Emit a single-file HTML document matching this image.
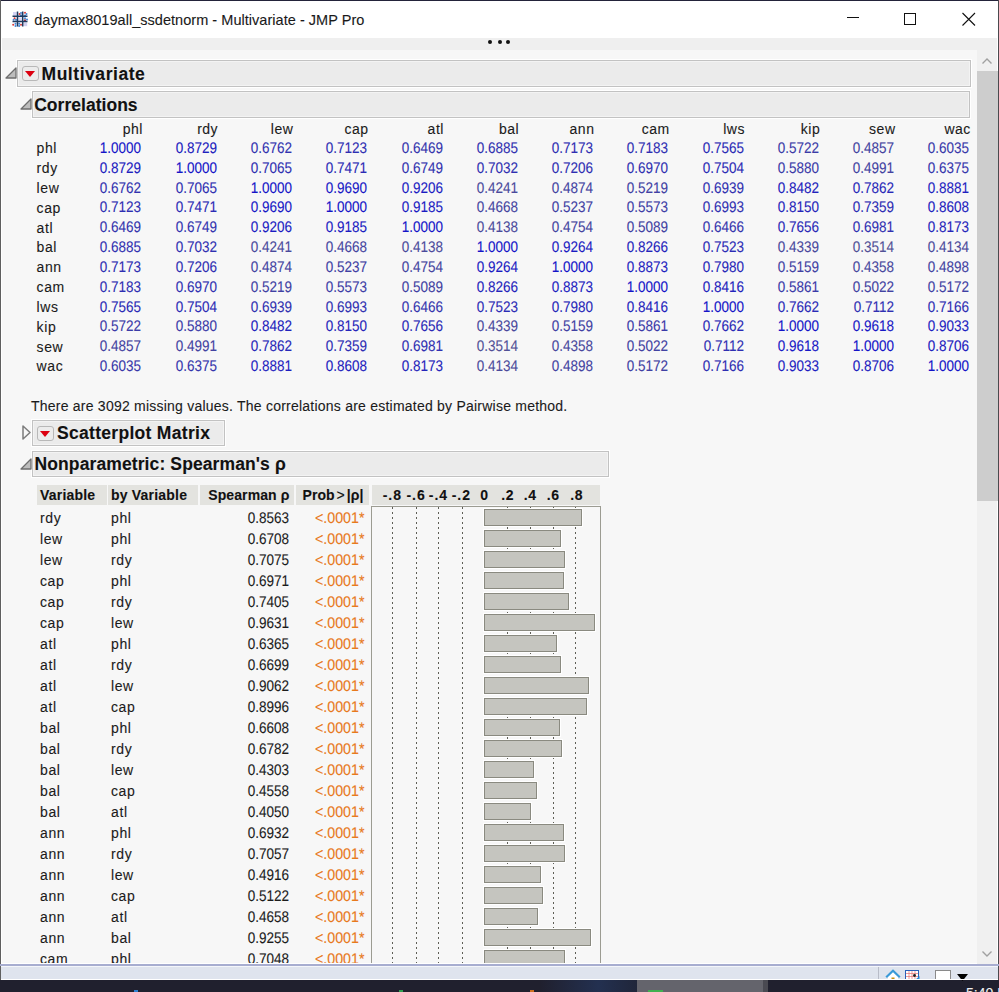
<!DOCTYPE html>
<html><head><meta charset="utf-8"><title>JMP Multivariate</title>
<style>
html,body{margin:0;padding:0;}
body{width:999px;height:992px;overflow:hidden;position:relative;background:#f7f7f7;font-family:"Liberation Sans", sans-serif;}
.t{position:absolute;white-space:pre;-webkit-text-stroke:0.1px currentColor;}
.r{position:absolute;box-sizing:border-box;}
svg{position:absolute;}
</style></head><body>

<div class="r" style="left:0px;top:0px;width:999px;height:38px;background:#ffffff;"></div>
<div class="r" style="left:0px;top:0px;width:999px;height:1px;background:#23233a;"></div>
<div class="r" style="left:0px;top:38px;width:999px;height:12px;background:#efefef;"></div>
<div class="r" style="left:488px;top:40px;width:4px;height:4px;border-radius:50%;background:#111;"></div>
<div class="r" style="left:498px;top:40px;width:4px;height:4px;border-radius:50%;background:#111;"></div>
<div class="r" style="left:506px;top:40px;width:4px;height:4px;border-radius:50%;background:#111;"></div>
<svg style="left:12px;top:11px" width="16" height="16" viewBox="0 0 16 16">
<rect x="1" y="1" width="3.6" height="3.6" fill="#d4d4f4"/>
<rect x="6.4" y="6.4" width="3.4" height="3.4" fill="#d8d8f4"/>
<rect x="11.6" y="11.6" width="3.6" height="3.6" fill="#d0d0f0"/>
<g fill="#3f86d6"><circle cx="9" cy="2" r="1"/><circle cx="9" cy="4.2" r="1"/><circle cx="14.5" cy="3" r="1"/><circle cx="13" cy="4.5" r="1"/><circle cx="1.6" cy="8.8" r="1"/><circle cx="4" cy="8.8" r="1"/><circle cx="13" cy="7.2" r="1"/><circle cx="15" cy="8.5" r="1"/><circle cx="3.5" cy="12.8" r="1"/><circle cx="3.5" cy="15" r="1"/><circle cx="7.2" cy="12.8" r="1"/><circle cx="7.2" cy="15" r="1"/></g>
<g fill="#d83a3a"><circle cx="7.5" cy="3" r="1"/><circle cx="13" cy="1.8" r="1"/><circle cx="2.6" cy="7.3" r="1"/><circle cx="13" cy="9.3" r="1" fill="#a02030"/><circle cx="1.2" cy="13.8" r="1"/><circle cx="9" cy="13.8" r="1"/></g>
<g stroke="#1e3a5f" stroke-width="1.5" fill="none"><path d="M5.5 0.5V15.5M10.7 0.5V15.5M0.5 5.3H15.5M0.5 10.5H15.5"/></g>
</svg>
<div class="t" style="top:12.14px;font-size:14.5px;line-height:16.67px;color:#1a1a1a;letter-spacing:0.035px;left:34.20px;">daymax8019all_ssdetnorm - Multivariate - JMP Pro</div>
<div class="r" style="left:847px;top:17px;width:12px;height:1px;background:#111;"></div>
<div class="r" style="left:904px;top:12.5px;width:12px;height:12px;border:1px solid #111;"></div>
<svg style="left:961px;top:12px" width="15" height="15" viewBox="0 0 15 15"><path d="M1.5 1L14 13.5M14 1L1.5 13.5" stroke="#111" stroke-width="1.1"/></svg>
<div class="r" style="left:0px;top:0px;width:1px;height:992px;background:#5f5f5f;"></div>
<div class="r" style="left:1px;top:1px;width:1px;height:963px;background:#ffffff;"></div>
<div class="r" style="left:998px;top:0px;width:1px;height:992px;background:#4a4a4e;"></div>
<div class="r" style="left:977px;top:50px;width:20px;height:915px;background:#f0f0f0;"></div>
<div class="r" style="left:997px;top:1px;width:1px;height:963px;background:#ffffff;"></div>
<div class="r" style="left:977px;top:71px;width:21px;height:430px;background:#cdcdcd;"></div>
<svg style="left:981px;top:57px" width="12" height="8" viewBox="0 0 12 8"><path d="M1.5 6.5L6 2L10.5 6.5" stroke="#a0a0a0" stroke-width="1.4" fill="none"/></svg>
<svg style="left:981px;top:950px" width="12" height="8" viewBox="0 0 12 8"><path d="M1.5 1.5L6 6L10.5 1.5" stroke="#a0a0a0" stroke-width="1.4" fill="none"/></svg>
<div class="r" style="left:17px;top:60px;width:954px;height:27px;background:#ebebeb;border:1px solid #c2c2c2;box-shadow:0 0 0 1px #ffffff, inset 0 0 0 1px #f3f3f3;"></div>
<svg style="left:5px;top:67px" width="12" height="12" viewBox="0 0 12 12"><path d="M1 11L11 1V11Z" fill="#bdbdbd" stroke="#6e6e6e" stroke-width="1.3" stroke-linejoin="round"/></svg>
<div class="r" style="left:22px;top:66px;width:17px;height:15px;background:#ececec;border:1px solid #b8b8b8;border-radius:3px;"></div>
<svg style="left:25px;top:71px" width="10" height="6" viewBox="0 0 10 6"><path d="M0 0H10L5 6Z" fill="#dc0010"/></svg>
<div class="t" style="top:63.68px;font-size:17.5px;line-height:20.12px;color:#111;font-weight:bold;letter-spacing:0.55px;left:41.50px;">Multivariate</div>
<div class="r" style="left:32px;top:91px;width:938px;height:27px;background:#ebebeb;border:1px solid #c2c2c2;box-shadow:0 0 0 1px #ffffff, inset 0 0 0 1px #f3f3f3;"></div>
<svg style="left:20px;top:98px" width="12" height="12" viewBox="0 0 12 12"><path d="M1 11L11 1V11Z" fill="#bdbdbd" stroke="#6e6e6e" stroke-width="1.3" stroke-linejoin="round"/></svg>
<div class="t" style="top:94.88px;font-size:17.5px;line-height:20.12px;color:#111;font-weight:bold;letter-spacing:0.03px;left:34.20px;">Correlations</div>
<div class="t" style="top:-0.92px;font-size:1px;line-height:1.15px;color:#1b1b1b;left:0.00px;"></div>
<div class="t" style="top:120.60px;font-size:14px;line-height:16.1px;color:#1b1b1b;letter-spacing:0.5px;right:856.20px;">phl</div>
<div class="t" style="top:120.60px;font-size:14px;line-height:16.1px;color:#1b1b1b;letter-spacing:0.5px;right:780.93px;">rdy</div>
<div class="t" style="top:120.60px;font-size:14px;line-height:16.1px;color:#1b1b1b;letter-spacing:0.5px;right:705.66px;">lew</div>
<div class="t" style="top:120.60px;font-size:14px;line-height:16.1px;color:#1b1b1b;letter-spacing:0.5px;right:630.39px;">cap</div>
<div class="t" style="top:120.60px;font-size:14px;line-height:16.1px;color:#1b1b1b;letter-spacing:0.5px;right:555.12px;">atl</div>
<div class="t" style="top:120.60px;font-size:14px;line-height:16.1px;color:#1b1b1b;letter-spacing:0.5px;right:479.85px;">bal</div>
<div class="t" style="top:120.60px;font-size:14px;line-height:16.1px;color:#1b1b1b;letter-spacing:0.5px;right:404.58px;">ann</div>
<div class="t" style="top:120.60px;font-size:14px;line-height:16.1px;color:#1b1b1b;letter-spacing:0.5px;right:329.31px;">cam</div>
<div class="t" style="top:120.60px;font-size:14px;line-height:16.1px;color:#1b1b1b;letter-spacing:0.5px;right:254.04px;">lws</div>
<div class="t" style="top:120.60px;font-size:14px;line-height:16.1px;color:#1b1b1b;letter-spacing:0.5px;right:178.77px;">kip</div>
<div class="t" style="top:120.60px;font-size:14px;line-height:16.1px;color:#1b1b1b;letter-spacing:0.5px;right:103.50px;">sew</div>
<div class="t" style="top:120.60px;font-size:14px;line-height:16.1px;color:#1b1b1b;letter-spacing:0.5px;right:28.23px;">wac</div>
<div class="t" style="top:140.30px;font-size:14px;line-height:16.1px;color:#1b1b1b;letter-spacing:0.6px;left:36.60px;">phl</div>
<div class="t" style="top:140.01px;font-size:15.4px;line-height:17.71px;color:#1414c8;right:857.50px;transform:scaleX(0.877);transform-origin:right 50%;text-rendering:geometricPrecision;">1.0000</div>
<div class="t" style="top:140.01px;font-size:15.4px;line-height:17.71px;color:#2020be;right:782.23px;transform:scaleX(0.877);transform-origin:right 50%;text-rendering:geometricPrecision;">0.8729</div>
<div class="t" style="top:140.01px;font-size:15.4px;line-height:17.71px;color:#3232af;right:706.96px;transform:scaleX(0.877);transform-origin:right 50%;text-rendering:geometricPrecision;">0.6762</div>
<div class="t" style="top:140.01px;font-size:15.4px;line-height:17.71px;color:#2e2eb2;right:631.69px;transform:scaleX(0.877);transform-origin:right 50%;text-rendering:geometricPrecision;">0.7123</div>
<div class="t" style="top:140.01px;font-size:15.4px;line-height:17.71px;color:#3434ad;right:556.42px;transform:scaleX(0.877);transform-origin:right 50%;text-rendering:geometricPrecision;">0.6469</div>
<div class="t" style="top:140.01px;font-size:15.4px;line-height:17.71px;color:#3131b0;right:481.15px;transform:scaleX(0.877);transform-origin:right 50%;text-rendering:geometricPrecision;">0.6885</div>
<div class="t" style="top:140.01px;font-size:15.4px;line-height:17.71px;color:#2e2eb2;right:405.88px;transform:scaleX(0.877);transform-origin:right 50%;text-rendering:geometricPrecision;">0.7173</div>
<div class="t" style="top:140.01px;font-size:15.4px;line-height:17.71px;color:#2e2eb2;right:330.61px;transform:scaleX(0.877);transform-origin:right 50%;text-rendering:geometricPrecision;">0.7183</div>
<div class="t" style="top:140.01px;font-size:15.4px;line-height:17.71px;color:#2a2ab5;right:255.34px;transform:scaleX(0.877);transform-origin:right 50%;text-rendering:geometricPrecision;">0.7565</div>
<div class="t" style="top:140.01px;font-size:15.4px;line-height:17.71px;color:#3b3ba7;right:180.07px;transform:scaleX(0.877);transform-origin:right 50%;text-rendering:geometricPrecision;">0.5722</div>
<div class="t" style="top:140.01px;font-size:15.4px;line-height:17.71px;color:#4343a0;right:104.80px;transform:scaleX(0.877);transform-origin:right 50%;text-rendering:geometricPrecision;">0.4857</div>
<div class="t" style="top:140.01px;font-size:15.4px;line-height:17.71px;color:#3838a9;right:29.53px;transform:scaleX(0.877);transform-origin:right 50%;text-rendering:geometricPrecision;">0.6035</div>
<div class="t" style="top:160.12px;font-size:14px;line-height:16.1px;color:#1b1b1b;letter-spacing:0.6px;left:36.60px;">rdy</div>
<div class="t" style="top:159.83px;font-size:15.4px;line-height:17.71px;color:#2020be;right:857.50px;transform:scaleX(0.877);transform-origin:right 50%;text-rendering:geometricPrecision;">0.8729</div>
<div class="t" style="top:159.83px;font-size:15.4px;line-height:17.71px;color:#1414c8;right:782.23px;transform:scaleX(0.877);transform-origin:right 50%;text-rendering:geometricPrecision;">1.0000</div>
<div class="t" style="top:159.83px;font-size:15.4px;line-height:17.71px;color:#2f2fb1;right:706.96px;transform:scaleX(0.877);transform-origin:right 50%;text-rendering:geometricPrecision;">0.7065</div>
<div class="t" style="top:159.83px;font-size:15.4px;line-height:17.71px;color:#2b2bb5;right:631.69px;transform:scaleX(0.877);transform-origin:right 50%;text-rendering:geometricPrecision;">0.7471</div>
<div class="t" style="top:159.83px;font-size:15.4px;line-height:17.71px;color:#3232af;right:556.42px;transform:scaleX(0.877);transform-origin:right 50%;text-rendering:geometricPrecision;">0.6749</div>
<div class="t" style="top:159.83px;font-size:15.4px;line-height:17.71px;color:#2f2fb1;right:481.15px;transform:scaleX(0.877);transform-origin:right 50%;text-rendering:geometricPrecision;">0.7032</div>
<div class="t" style="top:159.83px;font-size:15.4px;line-height:17.71px;color:#2e2eb2;right:405.88px;transform:scaleX(0.877);transform-origin:right 50%;text-rendering:geometricPrecision;">0.7206</div>
<div class="t" style="top:159.83px;font-size:15.4px;line-height:17.71px;color:#3030b1;right:330.61px;transform:scaleX(0.877);transform-origin:right 50%;text-rendering:geometricPrecision;">0.6970</div>
<div class="t" style="top:159.83px;font-size:15.4px;line-height:17.71px;color:#2b2bb5;right:255.34px;transform:scaleX(0.877);transform-origin:right 50%;text-rendering:geometricPrecision;">0.7504</div>
<div class="t" style="top:159.83px;font-size:15.4px;line-height:17.71px;color:#3a3aa8;right:180.07px;transform:scaleX(0.877);transform-origin:right 50%;text-rendering:geometricPrecision;">0.5880</div>
<div class="t" style="top:159.83px;font-size:15.4px;line-height:17.71px;color:#4242a1;right:104.80px;transform:scaleX(0.877);transform-origin:right 50%;text-rendering:geometricPrecision;">0.4991</div>
<div class="t" style="top:159.83px;font-size:15.4px;line-height:17.71px;color:#3535ac;right:29.53px;transform:scaleX(0.877);transform-origin:right 50%;text-rendering:geometricPrecision;">0.6375</div>
<div class="t" style="top:179.94px;font-size:14px;line-height:16.1px;color:#1b1b1b;letter-spacing:0.6px;left:36.60px;">lew</div>
<div class="t" style="top:179.65px;font-size:15.4px;line-height:17.71px;color:#3232af;right:857.50px;transform:scaleX(0.877);transform-origin:right 50%;text-rendering:geometricPrecision;">0.6762</div>
<div class="t" style="top:179.65px;font-size:15.4px;line-height:17.71px;color:#2f2fb1;right:782.23px;transform:scaleX(0.877);transform-origin:right 50%;text-rendering:geometricPrecision;">0.7065</div>
<div class="t" style="top:179.65px;font-size:15.4px;line-height:17.71px;color:#1414c8;right:706.96px;transform:scaleX(0.877);transform-origin:right 50%;text-rendering:geometricPrecision;">1.0000</div>
<div class="t" style="top:179.65px;font-size:15.4px;line-height:17.71px;color:#1717c6;right:631.69px;transform:scaleX(0.877);transform-origin:right 50%;text-rendering:geometricPrecision;">0.9690</div>
<div class="t" style="top:179.65px;font-size:15.4px;line-height:17.71px;color:#1b1bc2;right:556.42px;transform:scaleX(0.877);transform-origin:right 50%;text-rendering:geometricPrecision;">0.9206</div>
<div class="t" style="top:179.65px;font-size:15.4px;line-height:17.71px;color:#49499c;right:481.15px;transform:scaleX(0.877);transform-origin:right 50%;text-rendering:geometricPrecision;">0.4241</div>
<div class="t" style="top:179.65px;font-size:15.4px;line-height:17.71px;color:#4343a1;right:405.88px;transform:scaleX(0.877);transform-origin:right 50%;text-rendering:geometricPrecision;">0.4874</div>
<div class="t" style="top:179.65px;font-size:15.4px;line-height:17.71px;color:#4040a3;right:330.61px;transform:scaleX(0.877);transform-origin:right 50%;text-rendering:geometricPrecision;">0.5219</div>
<div class="t" style="top:179.65px;font-size:15.4px;line-height:17.71px;color:#3030b0;right:255.34px;transform:scaleX(0.877);transform-origin:right 50%;text-rendering:geometricPrecision;">0.6939</div>
<div class="t" style="top:179.65px;font-size:15.4px;line-height:17.71px;color:#2222bc;right:180.07px;transform:scaleX(0.877);transform-origin:right 50%;text-rendering:geometricPrecision;">0.8482</div>
<div class="t" style="top:179.65px;font-size:15.4px;line-height:17.71px;color:#2828b8;right:104.80px;transform:scaleX(0.877);transform-origin:right 50%;text-rendering:geometricPrecision;">0.7862</div>
<div class="t" style="top:179.65px;font-size:15.4px;line-height:17.71px;color:#1e1ebf;right:29.53px;transform:scaleX(0.877);transform-origin:right 50%;text-rendering:geometricPrecision;">0.8881</div>
<div class="t" style="top:199.76px;font-size:14px;line-height:16.1px;color:#1b1b1b;letter-spacing:0.6px;left:36.60px;">cap</div>
<div class="t" style="top:199.47px;font-size:15.4px;line-height:17.71px;color:#2e2eb2;right:857.50px;transform:scaleX(0.877);transform-origin:right 50%;text-rendering:geometricPrecision;">0.7123</div>
<div class="t" style="top:199.47px;font-size:15.4px;line-height:17.71px;color:#2b2bb5;right:782.23px;transform:scaleX(0.877);transform-origin:right 50%;text-rendering:geometricPrecision;">0.7471</div>
<div class="t" style="top:199.47px;font-size:15.4px;line-height:17.71px;color:#1717c6;right:706.96px;transform:scaleX(0.877);transform-origin:right 50%;text-rendering:geometricPrecision;">0.9690</div>
<div class="t" style="top:199.47px;font-size:15.4px;line-height:17.71px;color:#1414c8;right:631.69px;transform:scaleX(0.877);transform-origin:right 50%;text-rendering:geometricPrecision;">1.0000</div>
<div class="t" style="top:199.47px;font-size:15.4px;line-height:17.71px;color:#1b1bc2;right:556.42px;transform:scaleX(0.877);transform-origin:right 50%;text-rendering:geometricPrecision;">0.9185</div>
<div class="t" style="top:199.47px;font-size:15.4px;line-height:17.71px;color:#45459f;right:481.15px;transform:scaleX(0.877);transform-origin:right 50%;text-rendering:geometricPrecision;">0.4668</div>
<div class="t" style="top:199.47px;font-size:15.4px;line-height:17.71px;color:#4040a3;right:405.88px;transform:scaleX(0.877);transform-origin:right 50%;text-rendering:geometricPrecision;">0.5237</div>
<div class="t" style="top:199.47px;font-size:15.4px;line-height:17.71px;color:#3d3da6;right:330.61px;transform:scaleX(0.877);transform-origin:right 50%;text-rendering:geometricPrecision;">0.5573</div>
<div class="t" style="top:199.47px;font-size:15.4px;line-height:17.71px;color:#3030b1;right:255.34px;transform:scaleX(0.877);transform-origin:right 50%;text-rendering:geometricPrecision;">0.6993</div>
<div class="t" style="top:199.47px;font-size:15.4px;line-height:17.71px;color:#2525ba;right:180.07px;transform:scaleX(0.877);transform-origin:right 50%;text-rendering:geometricPrecision;">0.8150</div>
<div class="t" style="top:199.47px;font-size:15.4px;line-height:17.71px;color:#2c2cb4;right:104.80px;transform:scaleX(0.877);transform-origin:right 50%;text-rendering:geometricPrecision;">0.7359</div>
<div class="t" style="top:199.47px;font-size:15.4px;line-height:17.71px;color:#2121bd;right:29.53px;transform:scaleX(0.877);transform-origin:right 50%;text-rendering:geometricPrecision;">0.8608</div>
<div class="t" style="top:219.58px;font-size:14px;line-height:16.1px;color:#1b1b1b;letter-spacing:0.6px;left:36.60px;">atl</div>
<div class="t" style="top:219.29px;font-size:15.4px;line-height:17.71px;color:#3434ad;right:857.50px;transform:scaleX(0.877);transform-origin:right 50%;text-rendering:geometricPrecision;">0.6469</div>
<div class="t" style="top:219.29px;font-size:15.4px;line-height:17.71px;color:#3232af;right:782.23px;transform:scaleX(0.877);transform-origin:right 50%;text-rendering:geometricPrecision;">0.6749</div>
<div class="t" style="top:219.29px;font-size:15.4px;line-height:17.71px;color:#1b1bc2;right:706.96px;transform:scaleX(0.877);transform-origin:right 50%;text-rendering:geometricPrecision;">0.9206</div>
<div class="t" style="top:219.29px;font-size:15.4px;line-height:17.71px;color:#1b1bc2;right:631.69px;transform:scaleX(0.877);transform-origin:right 50%;text-rendering:geometricPrecision;">0.9185</div>
<div class="t" style="top:219.29px;font-size:15.4px;line-height:17.71px;color:#1414c8;right:556.42px;transform:scaleX(0.877);transform-origin:right 50%;text-rendering:geometricPrecision;">1.0000</div>
<div class="t" style="top:219.29px;font-size:15.4px;line-height:17.71px;color:#4a4a9b;right:481.15px;transform:scaleX(0.877);transform-origin:right 50%;text-rendering:geometricPrecision;">0.4138</div>
<div class="t" style="top:219.29px;font-size:15.4px;line-height:17.71px;color:#4444a0;right:405.88px;transform:scaleX(0.877);transform-origin:right 50%;text-rendering:geometricPrecision;">0.4754</div>
<div class="t" style="top:219.29px;font-size:15.4px;line-height:17.71px;color:#4141a2;right:330.61px;transform:scaleX(0.877);transform-origin:right 50%;text-rendering:geometricPrecision;">0.5089</div>
<div class="t" style="top:219.29px;font-size:15.4px;line-height:17.71px;color:#3535ad;right:255.34px;transform:scaleX(0.877);transform-origin:right 50%;text-rendering:geometricPrecision;">0.6466</div>
<div class="t" style="top:219.29px;font-size:15.4px;line-height:17.71px;color:#2a2ab6;right:180.07px;transform:scaleX(0.877);transform-origin:right 50%;text-rendering:geometricPrecision;">0.7656</div>
<div class="t" style="top:219.29px;font-size:15.4px;line-height:17.71px;color:#3030b1;right:104.80px;transform:scaleX(0.877);transform-origin:right 50%;text-rendering:geometricPrecision;">0.6981</div>
<div class="t" style="top:219.29px;font-size:15.4px;line-height:17.71px;color:#2525ba;right:29.53px;transform:scaleX(0.877);transform-origin:right 50%;text-rendering:geometricPrecision;">0.8173</div>
<div class="t" style="top:239.40px;font-size:14px;line-height:16.1px;color:#1b1b1b;letter-spacing:0.6px;left:36.60px;">bal</div>
<div class="t" style="top:239.11px;font-size:15.4px;line-height:17.71px;color:#3131b0;right:857.50px;transform:scaleX(0.877);transform-origin:right 50%;text-rendering:geometricPrecision;">0.6885</div>
<div class="t" style="top:239.11px;font-size:15.4px;line-height:17.71px;color:#2f2fb1;right:782.23px;transform:scaleX(0.877);transform-origin:right 50%;text-rendering:geometricPrecision;">0.7032</div>
<div class="t" style="top:239.11px;font-size:15.4px;line-height:17.71px;color:#49499c;right:706.96px;transform:scaleX(0.877);transform-origin:right 50%;text-rendering:geometricPrecision;">0.4241</div>
<div class="t" style="top:239.11px;font-size:15.4px;line-height:17.71px;color:#45459f;right:631.69px;transform:scaleX(0.877);transform-origin:right 50%;text-rendering:geometricPrecision;">0.4668</div>
<div class="t" style="top:239.11px;font-size:15.4px;line-height:17.71px;color:#4a4a9b;right:556.42px;transform:scaleX(0.877);transform-origin:right 50%;text-rendering:geometricPrecision;">0.4138</div>
<div class="t" style="top:239.11px;font-size:15.4px;line-height:17.71px;color:#1414c8;right:481.15px;transform:scaleX(0.877);transform-origin:right 50%;text-rendering:geometricPrecision;">1.0000</div>
<div class="t" style="top:239.11px;font-size:15.4px;line-height:17.71px;color:#1b1bc2;right:405.88px;transform:scaleX(0.877);transform-origin:right 50%;text-rendering:geometricPrecision;">0.9264</div>
<div class="t" style="top:239.11px;font-size:15.4px;line-height:17.71px;color:#2424bb;right:330.61px;transform:scaleX(0.877);transform-origin:right 50%;text-rendering:geometricPrecision;">0.8266</div>
<div class="t" style="top:239.11px;font-size:15.4px;line-height:17.71px;color:#2b2bb5;right:255.34px;transform:scaleX(0.877);transform-origin:right 50%;text-rendering:geometricPrecision;">0.7523</div>
<div class="t" style="top:239.11px;font-size:15.4px;line-height:17.71px;color:#48489c;right:180.07px;transform:scaleX(0.877);transform-origin:right 50%;text-rendering:geometricPrecision;">0.4339</div>
<div class="t" style="top:239.11px;font-size:15.4px;line-height:17.71px;color:#505096;right:104.80px;transform:scaleX(0.877);transform-origin:right 50%;text-rendering:geometricPrecision;">0.3514</div>
<div class="t" style="top:239.11px;font-size:15.4px;line-height:17.71px;color:#4a4a9b;right:29.53px;transform:scaleX(0.877);transform-origin:right 50%;text-rendering:geometricPrecision;">0.4134</div>
<div class="t" style="top:259.22px;font-size:14px;line-height:16.1px;color:#1b1b1b;letter-spacing:0.6px;left:36.60px;">ann</div>
<div class="t" style="top:258.93px;font-size:15.4px;line-height:17.71px;color:#2e2eb2;right:857.50px;transform:scaleX(0.877);transform-origin:right 50%;text-rendering:geometricPrecision;">0.7173</div>
<div class="t" style="top:258.93px;font-size:15.4px;line-height:17.71px;color:#2e2eb2;right:782.23px;transform:scaleX(0.877);transform-origin:right 50%;text-rendering:geometricPrecision;">0.7206</div>
<div class="t" style="top:258.93px;font-size:15.4px;line-height:17.71px;color:#4343a1;right:706.96px;transform:scaleX(0.877);transform-origin:right 50%;text-rendering:geometricPrecision;">0.4874</div>
<div class="t" style="top:258.93px;font-size:15.4px;line-height:17.71px;color:#4040a3;right:631.69px;transform:scaleX(0.877);transform-origin:right 50%;text-rendering:geometricPrecision;">0.5237</div>
<div class="t" style="top:258.93px;font-size:15.4px;line-height:17.71px;color:#4444a0;right:556.42px;transform:scaleX(0.877);transform-origin:right 50%;text-rendering:geometricPrecision;">0.4754</div>
<div class="t" style="top:258.93px;font-size:15.4px;line-height:17.71px;color:#1b1bc2;right:481.15px;transform:scaleX(0.877);transform-origin:right 50%;text-rendering:geometricPrecision;">0.9264</div>
<div class="t" style="top:258.93px;font-size:15.4px;line-height:17.71px;color:#1414c8;right:405.88px;transform:scaleX(0.877);transform-origin:right 50%;text-rendering:geometricPrecision;">1.0000</div>
<div class="t" style="top:258.93px;font-size:15.4px;line-height:17.71px;color:#1e1ebf;right:330.61px;transform:scaleX(0.877);transform-origin:right 50%;text-rendering:geometricPrecision;">0.8873</div>
<div class="t" style="top:258.93px;font-size:15.4px;line-height:17.71px;color:#2727b8;right:255.34px;transform:scaleX(0.877);transform-origin:right 50%;text-rendering:geometricPrecision;">0.7980</div>
<div class="t" style="top:258.93px;font-size:15.4px;line-height:17.71px;color:#4141a3;right:180.07px;transform:scaleX(0.877);transform-origin:right 50%;text-rendering:geometricPrecision;">0.5159</div>
<div class="t" style="top:258.93px;font-size:15.4px;line-height:17.71px;color:#48489d;right:104.80px;transform:scaleX(0.877);transform-origin:right 50%;text-rendering:geometricPrecision;">0.4358</div>
<div class="t" style="top:258.93px;font-size:15.4px;line-height:17.71px;color:#4343a1;right:29.53px;transform:scaleX(0.877);transform-origin:right 50%;text-rendering:geometricPrecision;">0.4898</div>
<div class="t" style="top:279.04px;font-size:14px;line-height:16.1px;color:#1b1b1b;letter-spacing:0.6px;left:36.60px;">cam</div>
<div class="t" style="top:278.75px;font-size:15.4px;line-height:17.71px;color:#2e2eb2;right:857.50px;transform:scaleX(0.877);transform-origin:right 50%;text-rendering:geometricPrecision;">0.7183</div>
<div class="t" style="top:278.75px;font-size:15.4px;line-height:17.71px;color:#3030b1;right:782.23px;transform:scaleX(0.877);transform-origin:right 50%;text-rendering:geometricPrecision;">0.6970</div>
<div class="t" style="top:278.75px;font-size:15.4px;line-height:17.71px;color:#4040a3;right:706.96px;transform:scaleX(0.877);transform-origin:right 50%;text-rendering:geometricPrecision;">0.5219</div>
<div class="t" style="top:278.75px;font-size:15.4px;line-height:17.71px;color:#3d3da6;right:631.69px;transform:scaleX(0.877);transform-origin:right 50%;text-rendering:geometricPrecision;">0.5573</div>
<div class="t" style="top:278.75px;font-size:15.4px;line-height:17.71px;color:#4141a2;right:556.42px;transform:scaleX(0.877);transform-origin:right 50%;text-rendering:geometricPrecision;">0.5089</div>
<div class="t" style="top:278.75px;font-size:15.4px;line-height:17.71px;color:#2424bb;right:481.15px;transform:scaleX(0.877);transform-origin:right 50%;text-rendering:geometricPrecision;">0.8266</div>
<div class="t" style="top:278.75px;font-size:15.4px;line-height:17.71px;color:#1e1ebf;right:405.88px;transform:scaleX(0.877);transform-origin:right 50%;text-rendering:geometricPrecision;">0.8873</div>
<div class="t" style="top:278.75px;font-size:15.4px;line-height:17.71px;color:#1414c8;right:330.61px;transform:scaleX(0.877);transform-origin:right 50%;text-rendering:geometricPrecision;">1.0000</div>
<div class="t" style="top:278.75px;font-size:15.4px;line-height:17.71px;color:#2323bc;right:255.34px;transform:scaleX(0.877);transform-origin:right 50%;text-rendering:geometricPrecision;">0.8416</div>
<div class="t" style="top:278.75px;font-size:15.4px;line-height:17.71px;color:#3a3aa8;right:180.07px;transform:scaleX(0.877);transform-origin:right 50%;text-rendering:geometricPrecision;">0.5861</div>
<div class="t" style="top:278.75px;font-size:15.4px;line-height:17.71px;color:#4242a2;right:104.80px;transform:scaleX(0.877);transform-origin:right 50%;text-rendering:geometricPrecision;">0.5022</div>
<div class="t" style="top:278.75px;font-size:15.4px;line-height:17.71px;color:#4040a3;right:29.53px;transform:scaleX(0.877);transform-origin:right 50%;text-rendering:geometricPrecision;">0.5172</div>
<div class="t" style="top:298.86px;font-size:14px;line-height:16.1px;color:#1b1b1b;letter-spacing:0.6px;left:36.60px;">lws</div>
<div class="t" style="top:298.57px;font-size:15.4px;line-height:17.71px;color:#2a2ab5;right:857.50px;transform:scaleX(0.877);transform-origin:right 50%;text-rendering:geometricPrecision;">0.7565</div>
<div class="t" style="top:298.57px;font-size:15.4px;line-height:17.71px;color:#2b2bb5;right:782.23px;transform:scaleX(0.877);transform-origin:right 50%;text-rendering:geometricPrecision;">0.7504</div>
<div class="t" style="top:298.57px;font-size:15.4px;line-height:17.71px;color:#3030b0;right:706.96px;transform:scaleX(0.877);transform-origin:right 50%;text-rendering:geometricPrecision;">0.6939</div>
<div class="t" style="top:298.57px;font-size:15.4px;line-height:17.71px;color:#3030b1;right:631.69px;transform:scaleX(0.877);transform-origin:right 50%;text-rendering:geometricPrecision;">0.6993</div>
<div class="t" style="top:298.57px;font-size:15.4px;line-height:17.71px;color:#3535ad;right:556.42px;transform:scaleX(0.877);transform-origin:right 50%;text-rendering:geometricPrecision;">0.6466</div>
<div class="t" style="top:298.57px;font-size:15.4px;line-height:17.71px;color:#2b2bb5;right:481.15px;transform:scaleX(0.877);transform-origin:right 50%;text-rendering:geometricPrecision;">0.7523</div>
<div class="t" style="top:298.57px;font-size:15.4px;line-height:17.71px;color:#2727b8;right:405.88px;transform:scaleX(0.877);transform-origin:right 50%;text-rendering:geometricPrecision;">0.7980</div>
<div class="t" style="top:298.57px;font-size:15.4px;line-height:17.71px;color:#2323bc;right:330.61px;transform:scaleX(0.877);transform-origin:right 50%;text-rendering:geometricPrecision;">0.8416</div>
<div class="t" style="top:298.57px;font-size:15.4px;line-height:17.71px;color:#1414c8;right:255.34px;transform:scaleX(0.877);transform-origin:right 50%;text-rendering:geometricPrecision;">1.0000</div>
<div class="t" style="top:298.57px;font-size:15.4px;line-height:17.71px;color:#2a2ab6;right:180.07px;transform:scaleX(0.877);transform-origin:right 50%;text-rendering:geometricPrecision;">0.7662</div>
<div class="t" style="top:298.57px;font-size:15.4px;line-height:17.71px;color:#2f2fb2;right:104.80px;transform:scaleX(0.877);transform-origin:right 50%;text-rendering:geometricPrecision;">0.7112</div>
<div class="t" style="top:298.57px;font-size:15.4px;line-height:17.71px;color:#2e2eb2;right:29.53px;transform:scaleX(0.877);transform-origin:right 50%;text-rendering:geometricPrecision;">0.7166</div>
<div class="t" style="top:318.68px;font-size:14px;line-height:16.1px;color:#1b1b1b;letter-spacing:0.6px;left:36.60px;">kip</div>
<div class="t" style="top:318.39px;font-size:15.4px;line-height:17.71px;color:#3b3ba7;right:857.50px;transform:scaleX(0.877);transform-origin:right 50%;text-rendering:geometricPrecision;">0.5722</div>
<div class="t" style="top:318.39px;font-size:15.4px;line-height:17.71px;color:#3a3aa8;right:782.23px;transform:scaleX(0.877);transform-origin:right 50%;text-rendering:geometricPrecision;">0.5880</div>
<div class="t" style="top:318.39px;font-size:15.4px;line-height:17.71px;color:#2222bc;right:706.96px;transform:scaleX(0.877);transform-origin:right 50%;text-rendering:geometricPrecision;">0.8482</div>
<div class="t" style="top:318.39px;font-size:15.4px;line-height:17.71px;color:#2525ba;right:631.69px;transform:scaleX(0.877);transform-origin:right 50%;text-rendering:geometricPrecision;">0.8150</div>
<div class="t" style="top:318.39px;font-size:15.4px;line-height:17.71px;color:#2a2ab6;right:556.42px;transform:scaleX(0.877);transform-origin:right 50%;text-rendering:geometricPrecision;">0.7656</div>
<div class="t" style="top:318.39px;font-size:15.4px;line-height:17.71px;color:#48489c;right:481.15px;transform:scaleX(0.877);transform-origin:right 50%;text-rendering:geometricPrecision;">0.4339</div>
<div class="t" style="top:318.39px;font-size:15.4px;line-height:17.71px;color:#4141a3;right:405.88px;transform:scaleX(0.877);transform-origin:right 50%;text-rendering:geometricPrecision;">0.5159</div>
<div class="t" style="top:318.39px;font-size:15.4px;line-height:17.71px;color:#3a3aa8;right:330.61px;transform:scaleX(0.877);transform-origin:right 50%;text-rendering:geometricPrecision;">0.5861</div>
<div class="t" style="top:318.39px;font-size:15.4px;line-height:17.71px;color:#2a2ab6;right:255.34px;transform:scaleX(0.877);transform-origin:right 50%;text-rendering:geometricPrecision;">0.7662</div>
<div class="t" style="top:318.39px;font-size:15.4px;line-height:17.71px;color:#1414c8;right:180.07px;transform:scaleX(0.877);transform-origin:right 50%;text-rendering:geometricPrecision;">1.0000</div>
<div class="t" style="top:318.39px;font-size:15.4px;line-height:17.71px;color:#1818c5;right:104.80px;transform:scaleX(0.877);transform-origin:right 50%;text-rendering:geometricPrecision;">0.9618</div>
<div class="t" style="top:318.39px;font-size:15.4px;line-height:17.71px;color:#1d1dc1;right:29.53px;transform:scaleX(0.877);transform-origin:right 50%;text-rendering:geometricPrecision;">0.9033</div>
<div class="t" style="top:338.50px;font-size:14px;line-height:16.1px;color:#1b1b1b;letter-spacing:0.6px;left:36.60px;">sew</div>
<div class="t" style="top:338.21px;font-size:15.4px;line-height:17.71px;color:#4343a0;right:857.50px;transform:scaleX(0.877);transform-origin:right 50%;text-rendering:geometricPrecision;">0.4857</div>
<div class="t" style="top:338.21px;font-size:15.4px;line-height:17.71px;color:#4242a1;right:782.23px;transform:scaleX(0.877);transform-origin:right 50%;text-rendering:geometricPrecision;">0.4991</div>
<div class="t" style="top:338.21px;font-size:15.4px;line-height:17.71px;color:#2828b8;right:706.96px;transform:scaleX(0.877);transform-origin:right 50%;text-rendering:geometricPrecision;">0.7862</div>
<div class="t" style="top:338.21px;font-size:15.4px;line-height:17.71px;color:#2c2cb4;right:631.69px;transform:scaleX(0.877);transform-origin:right 50%;text-rendering:geometricPrecision;">0.7359</div>
<div class="t" style="top:338.21px;font-size:15.4px;line-height:17.71px;color:#3030b1;right:556.42px;transform:scaleX(0.877);transform-origin:right 50%;text-rendering:geometricPrecision;">0.6981</div>
<div class="t" style="top:338.21px;font-size:15.4px;line-height:17.71px;color:#505096;right:481.15px;transform:scaleX(0.877);transform-origin:right 50%;text-rendering:geometricPrecision;">0.3514</div>
<div class="t" style="top:338.21px;font-size:15.4px;line-height:17.71px;color:#48489d;right:405.88px;transform:scaleX(0.877);transform-origin:right 50%;text-rendering:geometricPrecision;">0.4358</div>
<div class="t" style="top:338.21px;font-size:15.4px;line-height:17.71px;color:#4242a2;right:330.61px;transform:scaleX(0.877);transform-origin:right 50%;text-rendering:geometricPrecision;">0.5022</div>
<div class="t" style="top:338.21px;font-size:15.4px;line-height:17.71px;color:#2f2fb2;right:255.34px;transform:scaleX(0.877);transform-origin:right 50%;text-rendering:geometricPrecision;">0.7112</div>
<div class="t" style="top:338.21px;font-size:15.4px;line-height:17.71px;color:#1818c5;right:180.07px;transform:scaleX(0.877);transform-origin:right 50%;text-rendering:geometricPrecision;">0.9618</div>
<div class="t" style="top:338.21px;font-size:15.4px;line-height:17.71px;color:#1414c8;right:104.80px;transform:scaleX(0.877);transform-origin:right 50%;text-rendering:geometricPrecision;">1.0000</div>
<div class="t" style="top:338.21px;font-size:15.4px;line-height:17.71px;color:#2020be;right:29.53px;transform:scaleX(0.877);transform-origin:right 50%;text-rendering:geometricPrecision;">0.8706</div>
<div class="t" style="top:358.32px;font-size:14px;line-height:16.1px;color:#1b1b1b;letter-spacing:0.6px;left:36.60px;">wac</div>
<div class="t" style="top:358.03px;font-size:15.4px;line-height:17.71px;color:#3838a9;right:857.50px;transform:scaleX(0.877);transform-origin:right 50%;text-rendering:geometricPrecision;">0.6035</div>
<div class="t" style="top:358.03px;font-size:15.4px;line-height:17.71px;color:#3535ac;right:782.23px;transform:scaleX(0.877);transform-origin:right 50%;text-rendering:geometricPrecision;">0.6375</div>
<div class="t" style="top:358.03px;font-size:15.4px;line-height:17.71px;color:#1e1ebf;right:706.96px;transform:scaleX(0.877);transform-origin:right 50%;text-rendering:geometricPrecision;">0.8881</div>
<div class="t" style="top:358.03px;font-size:15.4px;line-height:17.71px;color:#2121bd;right:631.69px;transform:scaleX(0.877);transform-origin:right 50%;text-rendering:geometricPrecision;">0.8608</div>
<div class="t" style="top:358.03px;font-size:15.4px;line-height:17.71px;color:#2525ba;right:556.42px;transform:scaleX(0.877);transform-origin:right 50%;text-rendering:geometricPrecision;">0.8173</div>
<div class="t" style="top:358.03px;font-size:15.4px;line-height:17.71px;color:#4a4a9b;right:481.15px;transform:scaleX(0.877);transform-origin:right 50%;text-rendering:geometricPrecision;">0.4134</div>
<div class="t" style="top:358.03px;font-size:15.4px;line-height:17.71px;color:#4343a1;right:405.88px;transform:scaleX(0.877);transform-origin:right 50%;text-rendering:geometricPrecision;">0.4898</div>
<div class="t" style="top:358.03px;font-size:15.4px;line-height:17.71px;color:#4040a3;right:330.61px;transform:scaleX(0.877);transform-origin:right 50%;text-rendering:geometricPrecision;">0.5172</div>
<div class="t" style="top:358.03px;font-size:15.4px;line-height:17.71px;color:#2e2eb2;right:255.34px;transform:scaleX(0.877);transform-origin:right 50%;text-rendering:geometricPrecision;">0.7166</div>
<div class="t" style="top:358.03px;font-size:15.4px;line-height:17.71px;color:#1d1dc1;right:180.07px;transform:scaleX(0.877);transform-origin:right 50%;text-rendering:geometricPrecision;">0.9033</div>
<div class="t" style="top:358.03px;font-size:15.4px;line-height:17.71px;color:#2020be;right:104.80px;transform:scaleX(0.877);transform-origin:right 50%;text-rendering:geometricPrecision;">0.8706</div>
<div class="t" style="top:358.03px;font-size:15.4px;line-height:17.71px;color:#1414c8;right:29.53px;transform:scaleX(0.877);transform-origin:right 50%;text-rendering:geometricPrecision;">1.0000</div>
<div class="t" style="top:398.10px;font-size:14px;line-height:16.1px;color:#1b1b1b;letter-spacing:0.228px;left:31.00px;">There are 3092 missing values. The correlations are estimated by Pairwise method.</div>
<div class="r" style="left:32px;top:420px;width:193px;height:26px;background:#ebebeb;border:1px solid #c2c2c2;box-shadow:0 0 0 1px #ffffff, inset 0 0 0 1px #f3f3f3;"></div>
<svg style="left:21.5px;top:425px" width="9.0" height="15" viewBox="0 0 9.0 15"><path d="M1 1L8.0 7.5L1 14Z" fill="#f7f7f7" stroke="#7c7c7c" stroke-width="1.5" stroke-linejoin="round"/></svg>
<div class="r" style="left:37px;top:426px;width:17px;height:15px;background:#ececec;border:1px solid #b8b8b8;border-radius:3px;"></div>
<svg style="left:40px;top:431px" width="10" height="6" viewBox="0 0 10 6"><path d="M0 0H10L5 6Z" fill="#dc0010"/></svg>
<div class="t" style="top:423.28px;font-size:17.5px;line-height:20.12px;color:#111;font-weight:bold;letter-spacing:0.3px;left:57.00px;">Scatterplot Matrix</div>
<div class="r" style="left:32px;top:451px;width:577px;height:26px;background:#ebebeb;border:1px solid #c2c2c2;box-shadow:0 0 0 1px #ffffff, inset 0 0 0 1px #f3f3f3;"></div>
<svg style="left:20px;top:458px" width="12" height="12" viewBox="0 0 12 12"><path d="M1 11L11 1V11Z" fill="#bdbdbd" stroke="#6e6e6e" stroke-width="1.3" stroke-linejoin="round"/></svg>
<div class="t" style="top:454.18px;font-size:17.5px;line-height:20.12px;color:#111;font-weight:bold;letter-spacing:0.11px;left:34.50px;">Nonparametric: Spearman&#39;s ρ</div>
<div class="r" style="left:37px;top:485px;width:70px;height:20px;background:#e3e3df;"></div>
<div class="r" style="left:108px;top:485px;width:90px;height:20px;background:#e3e3df;"></div>
<div class="r" style="left:199.5px;top:485px;width:94.5px;height:20px;background:#e3e3df;"></div>
<div class="r" style="left:295.5px;top:485px;width:73.5px;height:20px;background:#e3e3df;"></div>
<div class="r" style="left:372px;top:485px;width:228px;height:20px;background:#e3e3df;"></div>
<div class="t" style="top:486.50px;font-size:14px;line-height:16.1px;color:#111;font-weight:bold;letter-spacing:0.2px;left:40.00px;">Variable</div>
<div class="t" style="top:486.50px;font-size:14px;line-height:16.1px;color:#111;font-weight:bold;letter-spacing:0.2px;left:111.00px;">by Variable</div>
<div class="t" style="top:486.50px;font-size:14px;line-height:16.1px;color:#111;font-weight:bold;letter-spacing:0.1px;right:709.50px;">Spearman ρ</div>
<div class="t" style="top:486.50px;font-size:14px;line-height:16.1px;color:#111;font-weight:bold;letter-spacing:0.05px;left:302.50px;">Prob<span style="font-weight:normal;margin-left:2px;margin-right:2px">&gt;</span>|ρ|</div>
<div class="t" style="top:486.50px;font-size:14px;line-height:16.1px;color:#111;font-weight:bold;letter-spacing:1.0px;left:292.30px;width:200px;text-align:center;">-.8</div>
<div class="t" style="top:486.50px;font-size:14px;line-height:16.1px;color:#111;font-weight:bold;letter-spacing:1.0px;left:316.10px;width:200px;text-align:center;">-.6</div>
<div class="t" style="top:486.50px;font-size:14px;line-height:16.1px;color:#111;font-weight:bold;letter-spacing:1.0px;left:338.40px;width:200px;text-align:center;">-.4</div>
<div class="t" style="top:486.50px;font-size:14px;line-height:16.1px;color:#111;font-weight:bold;letter-spacing:1.0px;left:361.30px;width:200px;text-align:center;">-.2</div>
<div class="t" style="top:486.50px;font-size:14px;line-height:16.1px;color:#111;font-weight:bold;left:384.20px;width:200px;text-align:center;">0</div>
<div class="t" style="top:486.50px;font-size:14px;line-height:16.1px;color:#111;font-weight:bold;letter-spacing:0.6px;left:407.70px;width:200px;text-align:center;">.2</div>
<div class="t" style="top:486.50px;font-size:14px;line-height:16.1px;color:#111;font-weight:bold;letter-spacing:0.6px;left:430.30px;width:200px;text-align:center;">.4</div>
<div class="t" style="top:486.50px;font-size:14px;line-height:16.1px;color:#111;font-weight:bold;letter-spacing:0.6px;left:453.10px;width:200px;text-align:center;">.6</div>
<div class="t" style="top:486.50px;font-size:14px;line-height:16.1px;color:#111;font-weight:bold;letter-spacing:0.6px;left:476.70px;width:200px;text-align:center;">.8</div>
<div class="r" style="left:371px;top:506px;width:230px;height:470px;border:1px solid #9c9c92;border-bottom:none;"></div>
<div class="r" style="left:392px;top:507px;width:1px;height:460px;background:repeating-linear-gradient(to bottom,#5e5e56 0 2px,transparent 2px 5px);"></div>
<div class="r" style="left:416px;top:507px;width:1px;height:460px;background:repeating-linear-gradient(to bottom,#5e5e56 0 2px,transparent 2px 5px);"></div>
<div class="r" style="left:438px;top:507px;width:1px;height:460px;background:repeating-linear-gradient(to bottom,#5e5e56 0 2px,transparent 2px 5px);"></div>
<div class="r" style="left:462px;top:507px;width:1px;height:460px;background:repeating-linear-gradient(to bottom,#5e5e56 0 2px,transparent 2px 5px);"></div>
<div class="r" style="left:507px;top:507px;width:1px;height:460px;background:repeating-linear-gradient(to bottom,#5e5e56 0 2px,transparent 2px 5px);"></div>
<div class="r" style="left:530px;top:507px;width:1px;height:460px;background:repeating-linear-gradient(to bottom,#5e5e56 0 2px,transparent 2px 5px);"></div>
<div class="r" style="left:553px;top:507px;width:1px;height:460px;background:repeating-linear-gradient(to bottom,#5e5e56 0 2px,transparent 2px 5px);"></div>
<div class="r" style="left:575px;top:507px;width:1px;height:460px;background:repeating-linear-gradient(to bottom,#5e5e56 0 2px,transparent 2px 5px);"></div>
<div class="t" style="top:510.40px;font-size:14px;line-height:16.1px;color:#1b1b1b;letter-spacing:0.6px;left:40.00px;">rdy</div>
<div class="t" style="top:510.40px;font-size:14px;line-height:16.1px;color:#1b1b1b;letter-spacing:0.6px;left:111.00px;">phl</div>
<div class="t" style="top:509.71px;font-size:15.4px;line-height:17.71px;color:#1b1b1b;right:709.50px;transform:scaleX(0.88);transform-origin:right 50%;text-rendering:geometricPrecision;">0.8563</div>
<div class="t" style="top:509.71px;font-size:15.4px;line-height:17.71px;color:#e8791c;right:634.50px;transform:scaleX(0.927);transform-origin:right 50%;text-rendering:geometricPrecision;">&lt;.0001*</div>
<div class="r" style="left:484px;top:509px;width:98px;height:17px;background:#c5c5bf;border:1px solid #8a8a80;box-shadow:0 0 0 1px #ffffff;"></div>
<div class="t" style="top:531.40px;font-size:14px;line-height:16.1px;color:#1b1b1b;letter-spacing:0.6px;left:40.00px;">lew</div>
<div class="t" style="top:531.40px;font-size:14px;line-height:16.1px;color:#1b1b1b;letter-spacing:0.6px;left:111.00px;">phl</div>
<div class="t" style="top:530.71px;font-size:15.4px;line-height:17.71px;color:#1b1b1b;right:709.50px;transform:scaleX(0.88);transform-origin:right 50%;text-rendering:geometricPrecision;">0.6708</div>
<div class="t" style="top:530.71px;font-size:15.4px;line-height:17.71px;color:#e8791c;right:634.50px;transform:scaleX(0.927);transform-origin:right 50%;text-rendering:geometricPrecision;">&lt;.0001*</div>
<div class="r" style="left:484px;top:530px;width:77px;height:17px;background:#c5c5bf;border:1px solid #8a8a80;box-shadow:0 0 0 1px #ffffff;"></div>
<div class="t" style="top:552.40px;font-size:14px;line-height:16.1px;color:#1b1b1b;letter-spacing:0.6px;left:40.00px;">lew</div>
<div class="t" style="top:552.40px;font-size:14px;line-height:16.1px;color:#1b1b1b;letter-spacing:0.6px;left:111.00px;">rdy</div>
<div class="t" style="top:551.71px;font-size:15.4px;line-height:17.71px;color:#1b1b1b;right:709.50px;transform:scaleX(0.88);transform-origin:right 50%;text-rendering:geometricPrecision;">0.7075</div>
<div class="t" style="top:551.71px;font-size:15.4px;line-height:17.71px;color:#e8791c;right:634.50px;transform:scaleX(0.927);transform-origin:right 50%;text-rendering:geometricPrecision;">&lt;.0001*</div>
<div class="r" style="left:484px;top:551px;width:81px;height:17px;background:#c5c5bf;border:1px solid #8a8a80;box-shadow:0 0 0 1px #ffffff;"></div>
<div class="t" style="top:573.40px;font-size:14px;line-height:16.1px;color:#1b1b1b;letter-spacing:0.6px;left:40.00px;">cap</div>
<div class="t" style="top:573.40px;font-size:14px;line-height:16.1px;color:#1b1b1b;letter-spacing:0.6px;left:111.00px;">phl</div>
<div class="t" style="top:572.71px;font-size:15.4px;line-height:17.71px;color:#1b1b1b;right:709.50px;transform:scaleX(0.88);transform-origin:right 50%;text-rendering:geometricPrecision;">0.6971</div>
<div class="t" style="top:572.71px;font-size:15.4px;line-height:17.71px;color:#e8791c;right:634.50px;transform:scaleX(0.927);transform-origin:right 50%;text-rendering:geometricPrecision;">&lt;.0001*</div>
<div class="r" style="left:484px;top:572px;width:80px;height:17px;background:#c5c5bf;border:1px solid #8a8a80;box-shadow:0 0 0 1px #ffffff;"></div>
<div class="t" style="top:594.40px;font-size:14px;line-height:16.1px;color:#1b1b1b;letter-spacing:0.6px;left:40.00px;">cap</div>
<div class="t" style="top:594.40px;font-size:14px;line-height:16.1px;color:#1b1b1b;letter-spacing:0.6px;left:111.00px;">rdy</div>
<div class="t" style="top:593.71px;font-size:15.4px;line-height:17.71px;color:#1b1b1b;right:709.50px;transform:scaleX(0.88);transform-origin:right 50%;text-rendering:geometricPrecision;">0.7405</div>
<div class="t" style="top:593.71px;font-size:15.4px;line-height:17.71px;color:#e8791c;right:634.50px;transform:scaleX(0.927);transform-origin:right 50%;text-rendering:geometricPrecision;">&lt;.0001*</div>
<div class="r" style="left:484px;top:593px;width:85px;height:17px;background:#c5c5bf;border:1px solid #8a8a80;box-shadow:0 0 0 1px #ffffff;"></div>
<div class="t" style="top:615.40px;font-size:14px;line-height:16.1px;color:#1b1b1b;letter-spacing:0.6px;left:40.00px;">cap</div>
<div class="t" style="top:615.40px;font-size:14px;line-height:16.1px;color:#1b1b1b;letter-spacing:0.6px;left:111.00px;">lew</div>
<div class="t" style="top:614.71px;font-size:15.4px;line-height:17.71px;color:#1b1b1b;right:709.50px;transform:scaleX(0.88);transform-origin:right 50%;text-rendering:geometricPrecision;">0.9631</div>
<div class="t" style="top:614.71px;font-size:15.4px;line-height:17.71px;color:#e8791c;right:634.50px;transform:scaleX(0.927);transform-origin:right 50%;text-rendering:geometricPrecision;">&lt;.0001*</div>
<div class="r" style="left:484px;top:614px;width:111px;height:17px;background:#c5c5bf;border:1px solid #8a8a80;box-shadow:0 0 0 1px #ffffff;"></div>
<div class="t" style="top:636.40px;font-size:14px;line-height:16.1px;color:#1b1b1b;letter-spacing:0.6px;left:40.00px;">atl</div>
<div class="t" style="top:636.40px;font-size:14px;line-height:16.1px;color:#1b1b1b;letter-spacing:0.6px;left:111.00px;">phl</div>
<div class="t" style="top:635.71px;font-size:15.4px;line-height:17.71px;color:#1b1b1b;right:709.50px;transform:scaleX(0.88);transform-origin:right 50%;text-rendering:geometricPrecision;">0.6365</div>
<div class="t" style="top:635.71px;font-size:15.4px;line-height:17.71px;color:#e8791c;right:634.50px;transform:scaleX(0.927);transform-origin:right 50%;text-rendering:geometricPrecision;">&lt;.0001*</div>
<div class="r" style="left:484px;top:635px;width:73px;height:17px;background:#c5c5bf;border:1px solid #8a8a80;box-shadow:0 0 0 1px #ffffff;"></div>
<div class="t" style="top:657.40px;font-size:14px;line-height:16.1px;color:#1b1b1b;letter-spacing:0.6px;left:40.00px;">atl</div>
<div class="t" style="top:657.40px;font-size:14px;line-height:16.1px;color:#1b1b1b;letter-spacing:0.6px;left:111.00px;">rdy</div>
<div class="t" style="top:656.71px;font-size:15.4px;line-height:17.71px;color:#1b1b1b;right:709.50px;transform:scaleX(0.88);transform-origin:right 50%;text-rendering:geometricPrecision;">0.6699</div>
<div class="t" style="top:656.71px;font-size:15.4px;line-height:17.71px;color:#e8791c;right:634.50px;transform:scaleX(0.927);transform-origin:right 50%;text-rendering:geometricPrecision;">&lt;.0001*</div>
<div class="r" style="left:484px;top:656px;width:77px;height:17px;background:#c5c5bf;border:1px solid #8a8a80;box-shadow:0 0 0 1px #ffffff;"></div>
<div class="t" style="top:678.40px;font-size:14px;line-height:16.1px;color:#1b1b1b;letter-spacing:0.6px;left:40.00px;">atl</div>
<div class="t" style="top:678.40px;font-size:14px;line-height:16.1px;color:#1b1b1b;letter-spacing:0.6px;left:111.00px;">lew</div>
<div class="t" style="top:677.71px;font-size:15.4px;line-height:17.71px;color:#1b1b1b;right:709.50px;transform:scaleX(0.88);transform-origin:right 50%;text-rendering:geometricPrecision;">0.9062</div>
<div class="t" style="top:677.71px;font-size:15.4px;line-height:17.71px;color:#e8791c;right:634.50px;transform:scaleX(0.927);transform-origin:right 50%;text-rendering:geometricPrecision;">&lt;.0001*</div>
<div class="r" style="left:484px;top:677px;width:105px;height:17px;background:#c5c5bf;border:1px solid #8a8a80;box-shadow:0 0 0 1px #ffffff;"></div>
<div class="t" style="top:699.40px;font-size:14px;line-height:16.1px;color:#1b1b1b;letter-spacing:0.6px;left:40.00px;">atl</div>
<div class="t" style="top:699.40px;font-size:14px;line-height:16.1px;color:#1b1b1b;letter-spacing:0.6px;left:111.00px;">cap</div>
<div class="t" style="top:698.71px;font-size:15.4px;line-height:17.71px;color:#1b1b1b;right:709.50px;transform:scaleX(0.88);transform-origin:right 50%;text-rendering:geometricPrecision;">0.8996</div>
<div class="t" style="top:698.71px;font-size:15.4px;line-height:17.71px;color:#e8791c;right:634.50px;transform:scaleX(0.927);transform-origin:right 50%;text-rendering:geometricPrecision;">&lt;.0001*</div>
<div class="r" style="left:484px;top:698px;width:103px;height:17px;background:#c5c5bf;border:1px solid #8a8a80;box-shadow:0 0 0 1px #ffffff;"></div>
<div class="t" style="top:720.40px;font-size:14px;line-height:16.1px;color:#1b1b1b;letter-spacing:0.6px;left:40.00px;">bal</div>
<div class="t" style="top:720.40px;font-size:14px;line-height:16.1px;color:#1b1b1b;letter-spacing:0.6px;left:111.00px;">phl</div>
<div class="t" style="top:719.71px;font-size:15.4px;line-height:17.71px;color:#1b1b1b;right:709.50px;transform:scaleX(0.88);transform-origin:right 50%;text-rendering:geometricPrecision;">0.6608</div>
<div class="t" style="top:719.71px;font-size:15.4px;line-height:17.71px;color:#e8791c;right:634.50px;transform:scaleX(0.927);transform-origin:right 50%;text-rendering:geometricPrecision;">&lt;.0001*</div>
<div class="r" style="left:484px;top:719px;width:76px;height:17px;background:#c5c5bf;border:1px solid #8a8a80;box-shadow:0 0 0 1px #ffffff;"></div>
<div class="t" style="top:741.40px;font-size:14px;line-height:16.1px;color:#1b1b1b;letter-spacing:0.6px;left:40.00px;">bal</div>
<div class="t" style="top:741.40px;font-size:14px;line-height:16.1px;color:#1b1b1b;letter-spacing:0.6px;left:111.00px;">rdy</div>
<div class="t" style="top:740.71px;font-size:15.4px;line-height:17.71px;color:#1b1b1b;right:709.50px;transform:scaleX(0.88);transform-origin:right 50%;text-rendering:geometricPrecision;">0.6782</div>
<div class="t" style="top:740.71px;font-size:15.4px;line-height:17.71px;color:#e8791c;right:634.50px;transform:scaleX(0.927);transform-origin:right 50%;text-rendering:geometricPrecision;">&lt;.0001*</div>
<div class="r" style="left:484px;top:740px;width:78px;height:17px;background:#c5c5bf;border:1px solid #8a8a80;box-shadow:0 0 0 1px #ffffff;"></div>
<div class="t" style="top:762.40px;font-size:14px;line-height:16.1px;color:#1b1b1b;letter-spacing:0.6px;left:40.00px;">bal</div>
<div class="t" style="top:762.40px;font-size:14px;line-height:16.1px;color:#1b1b1b;letter-spacing:0.6px;left:111.00px;">lew</div>
<div class="t" style="top:761.71px;font-size:15.4px;line-height:17.71px;color:#1b1b1b;right:709.50px;transform:scaleX(0.88);transform-origin:right 50%;text-rendering:geometricPrecision;">0.4303</div>
<div class="t" style="top:761.71px;font-size:15.4px;line-height:17.71px;color:#e8791c;right:634.50px;transform:scaleX(0.927);transform-origin:right 50%;text-rendering:geometricPrecision;">&lt;.0001*</div>
<div class="r" style="left:484px;top:761px;width:50px;height:17px;background:#c5c5bf;border:1px solid #8a8a80;box-shadow:0 0 0 1px #ffffff;"></div>
<div class="t" style="top:783.40px;font-size:14px;line-height:16.1px;color:#1b1b1b;letter-spacing:0.6px;left:40.00px;">bal</div>
<div class="t" style="top:783.40px;font-size:14px;line-height:16.1px;color:#1b1b1b;letter-spacing:0.6px;left:111.00px;">cap</div>
<div class="t" style="top:782.71px;font-size:15.4px;line-height:17.71px;color:#1b1b1b;right:709.50px;transform:scaleX(0.88);transform-origin:right 50%;text-rendering:geometricPrecision;">0.4558</div>
<div class="t" style="top:782.71px;font-size:15.4px;line-height:17.71px;color:#e8791c;right:634.50px;transform:scaleX(0.927);transform-origin:right 50%;text-rendering:geometricPrecision;">&lt;.0001*</div>
<div class="r" style="left:484px;top:782px;width:53px;height:17px;background:#c5c5bf;border:1px solid #8a8a80;box-shadow:0 0 0 1px #ffffff;"></div>
<div class="t" style="top:804.40px;font-size:14px;line-height:16.1px;color:#1b1b1b;letter-spacing:0.6px;left:40.00px;">bal</div>
<div class="t" style="top:804.40px;font-size:14px;line-height:16.1px;color:#1b1b1b;letter-spacing:0.6px;left:111.00px;">atl</div>
<div class="t" style="top:803.71px;font-size:15.4px;line-height:17.71px;color:#1b1b1b;right:709.50px;transform:scaleX(0.88);transform-origin:right 50%;text-rendering:geometricPrecision;">0.4050</div>
<div class="t" style="top:803.71px;font-size:15.4px;line-height:17.71px;color:#e8791c;right:634.50px;transform:scaleX(0.927);transform-origin:right 50%;text-rendering:geometricPrecision;">&lt;.0001*</div>
<div class="r" style="left:484px;top:803px;width:47px;height:17px;background:#c5c5bf;border:1px solid #8a8a80;box-shadow:0 0 0 1px #ffffff;"></div>
<div class="t" style="top:825.40px;font-size:14px;line-height:16.1px;color:#1b1b1b;letter-spacing:0.6px;left:40.00px;">ann</div>
<div class="t" style="top:825.40px;font-size:14px;line-height:16.1px;color:#1b1b1b;letter-spacing:0.6px;left:111.00px;">phl</div>
<div class="t" style="top:824.71px;font-size:15.4px;line-height:17.71px;color:#1b1b1b;right:709.50px;transform:scaleX(0.88);transform-origin:right 50%;text-rendering:geometricPrecision;">0.6932</div>
<div class="t" style="top:824.71px;font-size:15.4px;line-height:17.71px;color:#e8791c;right:634.50px;transform:scaleX(0.927);transform-origin:right 50%;text-rendering:geometricPrecision;">&lt;.0001*</div>
<div class="r" style="left:484px;top:824px;width:80px;height:17px;background:#c5c5bf;border:1px solid #8a8a80;box-shadow:0 0 0 1px #ffffff;"></div>
<div class="t" style="top:846.40px;font-size:14px;line-height:16.1px;color:#1b1b1b;letter-spacing:0.6px;left:40.00px;">ann</div>
<div class="t" style="top:846.40px;font-size:14px;line-height:16.1px;color:#1b1b1b;letter-spacing:0.6px;left:111.00px;">rdy</div>
<div class="t" style="top:845.71px;font-size:15.4px;line-height:17.71px;color:#1b1b1b;right:709.50px;transform:scaleX(0.88);transform-origin:right 50%;text-rendering:geometricPrecision;">0.7057</div>
<div class="t" style="top:845.71px;font-size:15.4px;line-height:17.71px;color:#e8791c;right:634.50px;transform:scaleX(0.927);transform-origin:right 50%;text-rendering:geometricPrecision;">&lt;.0001*</div>
<div class="r" style="left:484px;top:845px;width:81px;height:17px;background:#c5c5bf;border:1px solid #8a8a80;box-shadow:0 0 0 1px #ffffff;"></div>
<div class="t" style="top:867.40px;font-size:14px;line-height:16.1px;color:#1b1b1b;letter-spacing:0.6px;left:40.00px;">ann</div>
<div class="t" style="top:867.40px;font-size:14px;line-height:16.1px;color:#1b1b1b;letter-spacing:0.6px;left:111.00px;">lew</div>
<div class="t" style="top:866.71px;font-size:15.4px;line-height:17.71px;color:#1b1b1b;right:709.50px;transform:scaleX(0.88);transform-origin:right 50%;text-rendering:geometricPrecision;">0.4916</div>
<div class="t" style="top:866.71px;font-size:15.4px;line-height:17.71px;color:#e8791c;right:634.50px;transform:scaleX(0.927);transform-origin:right 50%;text-rendering:geometricPrecision;">&lt;.0001*</div>
<div class="r" style="left:484px;top:866px;width:57px;height:17px;background:#c5c5bf;border:1px solid #8a8a80;box-shadow:0 0 0 1px #ffffff;"></div>
<div class="t" style="top:888.40px;font-size:14px;line-height:16.1px;color:#1b1b1b;letter-spacing:0.6px;left:40.00px;">ann</div>
<div class="t" style="top:888.40px;font-size:14px;line-height:16.1px;color:#1b1b1b;letter-spacing:0.6px;left:111.00px;">cap</div>
<div class="t" style="top:887.71px;font-size:15.4px;line-height:17.71px;color:#1b1b1b;right:709.50px;transform:scaleX(0.88);transform-origin:right 50%;text-rendering:geometricPrecision;">0.5122</div>
<div class="t" style="top:887.71px;font-size:15.4px;line-height:17.71px;color:#e8791c;right:634.50px;transform:scaleX(0.927);transform-origin:right 50%;text-rendering:geometricPrecision;">&lt;.0001*</div>
<div class="r" style="left:484px;top:887px;width:59px;height:17px;background:#c5c5bf;border:1px solid #8a8a80;box-shadow:0 0 0 1px #ffffff;"></div>
<div class="t" style="top:909.40px;font-size:14px;line-height:16.1px;color:#1b1b1b;letter-spacing:0.6px;left:40.00px;">ann</div>
<div class="t" style="top:909.40px;font-size:14px;line-height:16.1px;color:#1b1b1b;letter-spacing:0.6px;left:111.00px;">atl</div>
<div class="t" style="top:908.71px;font-size:15.4px;line-height:17.71px;color:#1b1b1b;right:709.50px;transform:scaleX(0.88);transform-origin:right 50%;text-rendering:geometricPrecision;">0.4658</div>
<div class="t" style="top:908.71px;font-size:15.4px;line-height:17.71px;color:#e8791c;right:634.50px;transform:scaleX(0.927);transform-origin:right 50%;text-rendering:geometricPrecision;">&lt;.0001*</div>
<div class="r" style="left:484px;top:908px;width:54px;height:17px;background:#c5c5bf;border:1px solid #8a8a80;box-shadow:0 0 0 1px #ffffff;"></div>
<div class="t" style="top:930.40px;font-size:14px;line-height:16.1px;color:#1b1b1b;letter-spacing:0.6px;left:40.00px;">ann</div>
<div class="t" style="top:930.40px;font-size:14px;line-height:16.1px;color:#1b1b1b;letter-spacing:0.6px;left:111.00px;">bal</div>
<div class="t" style="top:929.71px;font-size:15.4px;line-height:17.71px;color:#1b1b1b;right:709.50px;transform:scaleX(0.88);transform-origin:right 50%;text-rendering:geometricPrecision;">0.9255</div>
<div class="t" style="top:929.71px;font-size:15.4px;line-height:17.71px;color:#e8791c;right:634.50px;transform:scaleX(0.927);transform-origin:right 50%;text-rendering:geometricPrecision;">&lt;.0001*</div>
<div class="r" style="left:484px;top:929px;width:107px;height:17px;background:#c5c5bf;border:1px solid #8a8a80;box-shadow:0 0 0 1px #ffffff;"></div>
<div class="t" style="top:951.40px;font-size:14px;line-height:16.1px;color:#1b1b1b;letter-spacing:0.6px;left:40.00px;">cam</div>
<div class="t" style="top:951.40px;font-size:14px;line-height:16.1px;color:#1b1b1b;letter-spacing:0.6px;left:111.00px;">phl</div>
<div class="t" style="top:950.71px;font-size:15.4px;line-height:17.71px;color:#1b1b1b;right:709.50px;transform:scaleX(0.88);transform-origin:right 50%;text-rendering:geometricPrecision;">0.7048</div>
<div class="t" style="top:950.71px;font-size:15.4px;line-height:17.71px;color:#e8791c;right:634.50px;transform:scaleX(0.927);transform-origin:right 50%;text-rendering:geometricPrecision;">&lt;.0001*</div>
<div class="r" style="left:484px;top:950px;width:81px;height:17px;background:#c5c5bf;border:1px solid #8a8a80;box-shadow:0 0 0 1px #ffffff;"></div>
<div class="r" style="left:2px;top:963px;width:975px;height:1px;background:#ffffff;"></div>
<div class="r" style="left:0px;top:964px;width:999px;height:2px;background:#a7add0;"></div>
<div class="r" style="left:1px;top:966px;width:997px;height:14px;background:#dfe4ee;"></div>
<div class="r" style="left:878px;top:966px;width:1px;height:14px;background:#b8bcc8;"></div>
<div class="r" style="left:0px;top:980px;width:999px;height:12px;background:#20202e;"></div>
<div class="r" style="left:540px;top:980px;width:97px;height:12px;background:linear-gradient(to right,#20202e,#233050 60%,#20263a);"></div>
<div class="r" style="left:637px;top:980px;width:126px;height:12px;background:#64646c;"></div>
<div class="r" style="left:763px;top:980px;width:5px;height:12px;background:#4a4a52;"></div>
<div class="r" style="left:648px;top:990px;width:15px;height:2px;background:#40b050;"></div>
<div class="r" style="left:134px;top:990px;width:4px;height:2px;background:#2f80d0;"></div>
<div class="r" style="left:399px;top:990px;width:4px;height:2px;background:#30a050;"></div>
<div class="r" style="left:530px;top:990px;width:4px;height:2px;background:#d07020;"></div>
<svg style="left:884px;top:968px" width="18" height="12" viewBox="0 0 18 12"><path d="M4 12V8L9 3.5L14 8V12Z" fill="#ffffff"/><path d="M2.2 9.2L9 2.8L15.8 9.2" stroke="#3a9ad8" stroke-width="2.2" fill="none" stroke-linejoin="miter"/><rect x="7.5" y="9.5" width="3" height="2.5" fill="#c89010"/></svg>
<svg style="left:905px;top:970px" width="15" height="10" viewBox="0 0 15 10"><rect x="0.5" y="0.5" width="13" height="11" fill="#fff" stroke="#2a5fb8"/><path d="M1 3.5H13M1 6.5H13M4 1V11M7 1V11M10 1V11" stroke="#e87070" stroke-width="0.7"/><circle cx="9.5" cy="5.5" r="1.4" fill="#222"/><path d="M10 10L14.5 6V10Z" fill="#2a8ad8"/></svg>
<div class="r" style="left:935px;top:970px;width:16px;height:9px;background:#ffffff;border:1px solid #8a8a8a;border-bottom:none;"></div>
<svg style="left:957px;top:973.5px" width="11" height="7" viewBox="0 0 11 7"><path d="M0 0H11L5.5 7Z" fill="#000"/></svg>
<div class="r" style="left:1px;top:979px;width:997px;height:1px;background:#ffffff;"></div>
<div class="r" style="left:1px;top:966px;width:997px;height:1px;background:#f4f6fa;"></div>
<div class="t" style="top:984.60px;font-size:14px;line-height:16.1px;color:#f0f0f0;left:966.00px;">5:40 PM</div>
</body></html>
